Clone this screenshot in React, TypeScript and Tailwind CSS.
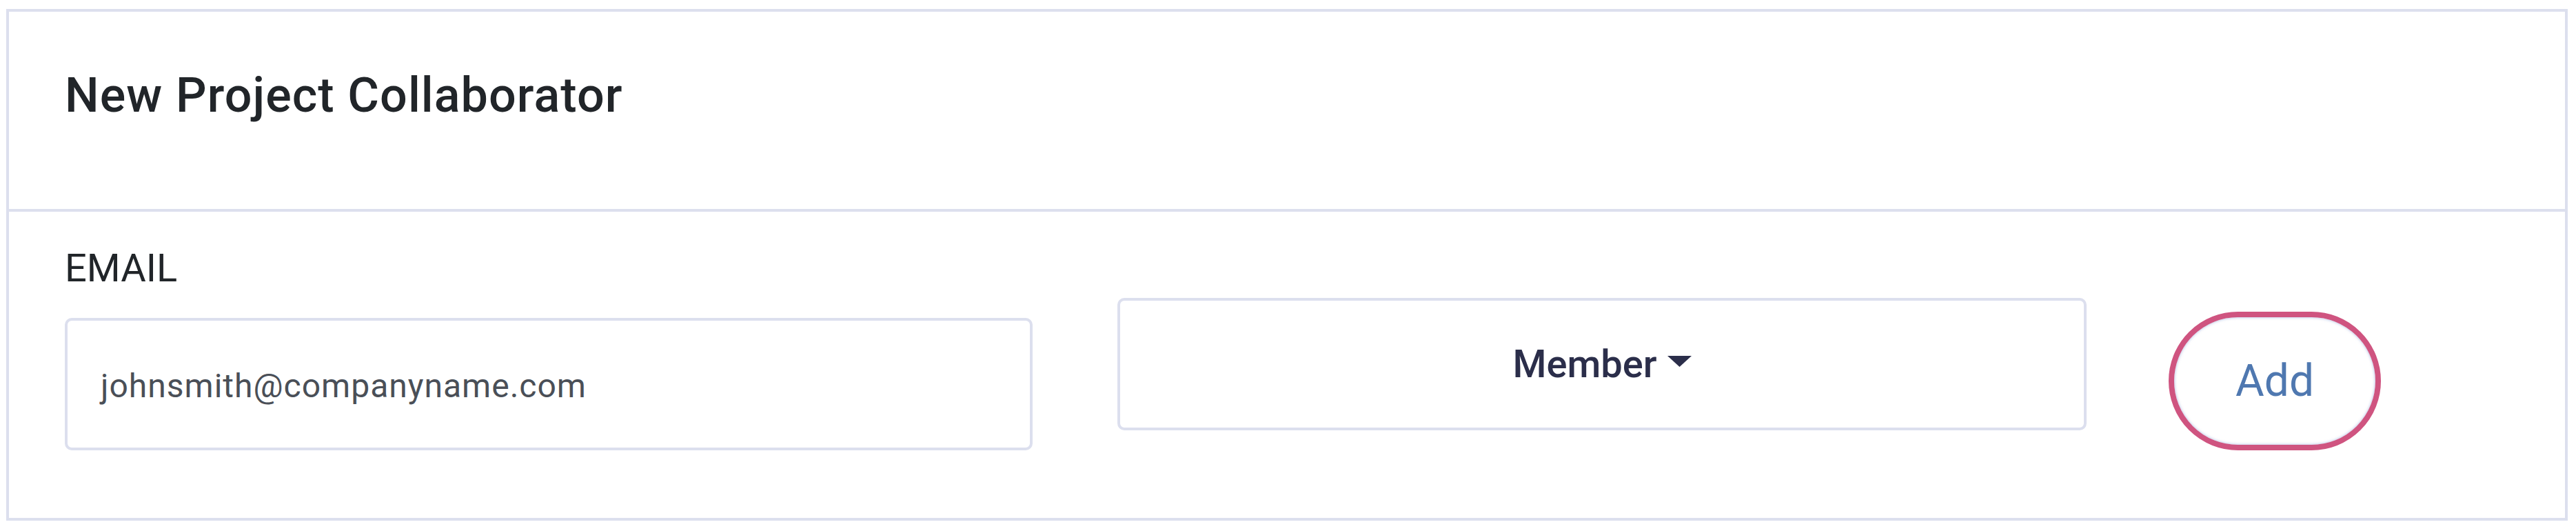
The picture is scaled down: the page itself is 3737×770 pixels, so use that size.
import React from 'react';

const App: React.FC = () => {
  return (
    <div className="min-h-[770px] w-[3737px] bg-white pt-[13px] pl-[9px] font-['Roboto',sans-serif]">
      <div className="w-[3716px] h-[742px] border-4 border-[#dcdfee] bg-white">
        <div className="h-[290px] border-b-4 border-[#dcdfee] pl-[81px] pt-[80px]">
          <h1 className="text-[70px] leading-[82px] tracking-[1.1px] font-medium text-[#212529]">New Project Collaborator</h1>
        </div>

        <div className="flex items-end pl-[81px] pt-[49px]">
          <div className="flex flex-col">
            <label className="text-[56px] leading-[66px] text-[#212529] mb-[39px]">EMAIL</label>
            <div className="w-[1404px] h-[192px] border-4 border-[#dcdfee] rounded-[10px] flex items-center pl-[48px] pt-[6px]">
              <span className="text-[48px] tracking-[1px] text-[#4a4f57]">johnsmith@companyname.com</span>
            </div>
          </div>

          <button className="ml-[123px] mb-[29px] w-[1406px] h-[192px] border-4 border-[#dcdfee] rounded-[10px] flex items-center justify-center gap-[15px] bg-white">
            <span className="text-[56px] font-medium text-[#2b2e4a]">Member</span>
            <svg width="35" height="16" viewBox="0 0 35 16" className="mb-[8px]">
              <polygon points="0,0 35,0 17.5,16" fill="#2b2e4a" />
            </svg>
          </button>

          <button className="ml-[119px] w-[308px] h-[201px] rounded-full border-[8px] border-[#cf5480] bg-white flex items-center justify-center shadow-[inset_0_0_4px_rgba(110,130,200,0.6)]">
            <span className="text-[64px] text-[#4f78b0]">Add</span>
          </button>
        </div>
      </div>
    </div>
  );
};

export default App;
